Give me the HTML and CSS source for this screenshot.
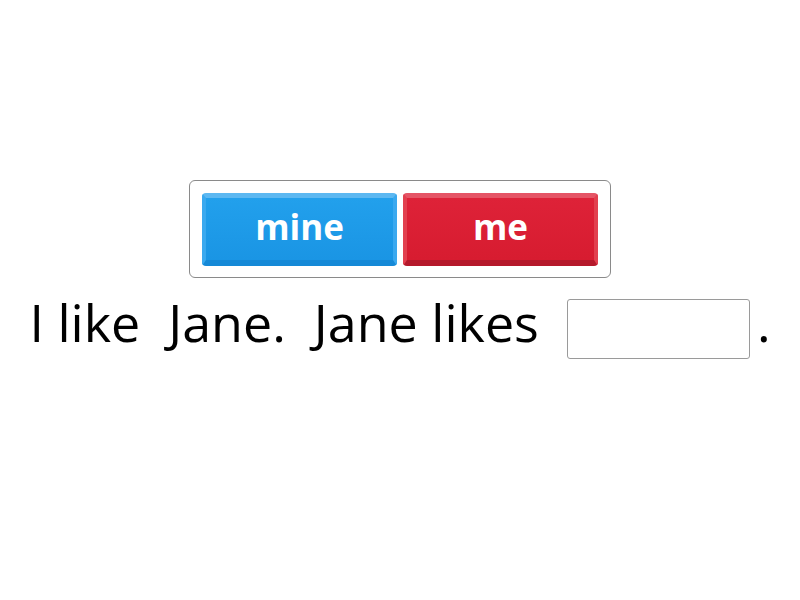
FILE: index.html
```html
<!DOCTYPE html>
<html lang="en">
<head>
    <meta charset="UTF-8">
    <title>Complete the sentence</title>
    <link rel="stylesheet" href="styles.css">
</head>
<body>
    <div class="game">
        <!-- Answer choices -->
        <div class="choices">
            <div class="tile tile-blue">mine</div>
            <div class="tile tile-red">me</div>
        </div>
        <!-- Sentence with blank -->
        <div class="sentence">
            <span class="word">I like</span>
            <span class="word">Jane.</span>
            <span class="word">Jane likes</span>
            <span class="gap-wrap">
                <span class="blank"></span>
                <span class="word">.</span>
            </span>
        </div>
    </div>
</body>
</html>
```

FILE: styles.css
```css
body {
    font-family: "Open Sans", sans-serif;
    margin: 0;
    padding: 0;
    background: #fff;
}
.game {
    display: flex;
    flex-direction: column;
    align-items: center;
    padding-top: 180px;
}
.choices {
    display: flex;
    gap: 6px;
    padding: 12px 12px 11px 12px;
    border: 1px solid #8a8a8a;
    border-radius: 6px;
}
.tile {
    width: 195px;
    height: 73px;
    box-sizing: border-box;
    border-radius: 4px;
    color: #fff;
    font-weight: bold;
    font-size: 35px;
    display: flex;
    align-items: center;
    justify-content: center;
    padding-bottom: 6px;
    border-style: solid;
    border-width: 5px 4px 6px 4px;
}
.tile-blue {
    background: linear-gradient(#22a0ec, #1a95e4);
    border-color: #5db8f1 #3aa9ef #1589d7 #3aa9ef;
}
.tile-red {
    background: linear-gradient(#de2238, #d71c30);
    border-color: #e55566 #e2404f #b5192b #e2404f;
}
.sentence {
    display: flex;
    align-items: flex-start;
    gap: 28px;
    margin-top: 13px;
    font-size: 52px;
    line-height: 1.2;
    color: #000;
}
.gap-wrap {
    display: flex;
    align-items: flex-start;
    gap: 7px;
}
.blank {
    width: 183px;
    height: 60px;
    box-sizing: border-box;
    margin-top: 8px;
    border: 1px solid #9a9a9a;
    border-radius: 3px;
}
```
